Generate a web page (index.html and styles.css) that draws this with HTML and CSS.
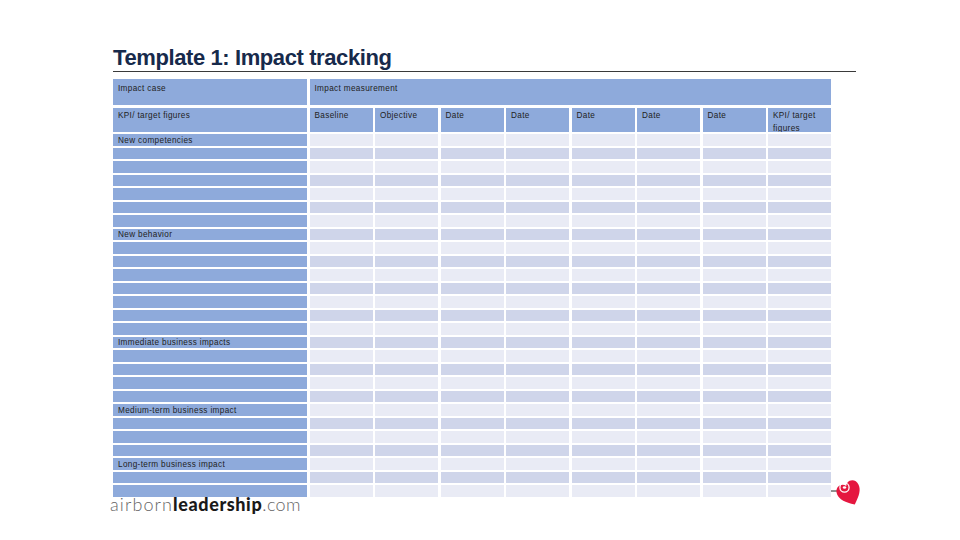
FILE: index.html
```html
<!DOCTYPE html>
<html>
<head>
<meta charset="utf-8">
<link rel="stylesheet" href="styles.css">
</head>
<body>
<div class="slide">
  <h1 class="title">Template 1: Impact tracking</h1>
  <div class="rule"></div>
  <div class="table">
    <div class="row head1"><span class="h">Impact case</span><span class="h wide">Impact measurement</span></div>
    <div class="row head2"><span class="h">KPI/ target figures</span><span class="h">Baseline</span><span class="h">Objective</span><span class="h">Date</span><span class="h">Date</span><span class="h">Date</span><span class="h">Date</span><span class="h">Date</span><span class="h">KPI/ target figures</span></div>
    <div class="body">
      <div class="row"><span class="k">New competencies</span><span></span><span></span><span></span><span></span><span></span><span></span><span></span><span></span></div>
      <div class="row"><span class="k"></span><span></span><span></span><span></span><span></span><span></span><span></span><span></span><span></span></div>
      <div class="row"><span class="k"></span><span></span><span></span><span></span><span></span><span></span><span></span><span></span><span></span></div>
      <div class="row"><span class="k"></span><span></span><span></span><span></span><span></span><span></span><span></span><span></span><span></span></div>
      <div class="row"><span class="k"></span><span></span><span></span><span></span><span></span><span></span><span></span><span></span><span></span></div>
      <div class="row"><span class="k"></span><span></span><span></span><span></span><span></span><span></span><span></span><span></span><span></span></div>
      <div class="row"><span class="k"></span><span></span><span></span><span></span><span></span><span></span><span></span><span></span><span></span></div>
      <div class="row"><span class="k">New behavior</span><span></span><span></span><span></span><span></span><span></span><span></span><span></span><span></span></div>
      <div class="row"><span class="k"></span><span></span><span></span><span></span><span></span><span></span><span></span><span></span><span></span></div>
      <div class="row"><span class="k"></span><span></span><span></span><span></span><span></span><span></span><span></span><span></span><span></span></div>
      <div class="row"><span class="k"></span><span></span><span></span><span></span><span></span><span></span><span></span><span></span><span></span></div>
      <div class="row"><span class="k"></span><span></span><span></span><span></span><span></span><span></span><span></span><span></span><span></span></div>
      <div class="row"><span class="k"></span><span></span><span></span><span></span><span></span><span></span><span></span><span></span><span></span></div>
      <div class="row"><span class="k"></span><span></span><span></span><span></span><span></span><span></span><span></span><span></span><span></span></div>
      <div class="row"><span class="k"></span><span></span><span></span><span></span><span></span><span></span><span></span><span></span><span></span></div>
      <div class="row"><span class="k">Immediate business impacts</span><span></span><span></span><span></span><span></span><span></span><span></span><span></span><span></span></div>
      <div class="row"><span class="k"></span><span></span><span></span><span></span><span></span><span></span><span></span><span></span><span></span></div>
      <div class="row"><span class="k"></span><span></span><span></span><span></span><span></span><span></span><span></span><span></span><span></span></div>
      <div class="row"><span class="k"></span><span></span><span></span><span></span><span></span><span></span><span></span><span></span><span></span></div>
      <div class="row"><span class="k"></span><span></span><span></span><span></span><span></span><span></span><span></span><span></span><span></span></div>
      <div class="row"><span class="k">Medium-term business impact</span><span></span><span></span><span></span><span></span><span></span><span></span><span></span><span></span></div>
      <div class="row"><span class="k"></span><span></span><span></span><span></span><span></span><span></span><span></span><span></span><span></span></div>
      <div class="row"><span class="k"></span><span></span><span></span><span></span><span></span><span></span><span></span><span></span><span></span></div>
      <div class="row"><span class="k"></span><span></span><span></span><span></span><span></span><span></span><span></span><span></span><span></span></div>
      <div class="row"><span class="k">Long-term business impact</span><span></span><span></span><span></span><span></span><span></span><span></span><span></span><span></span></div>
      <div class="row"><span class="k"></span><span></span><span></span><span></span><span></span><span></span><span></span><span></span><span></span></div>
      <div class="row"><span class="k"></span><span></span><span></span><span></span><span></span><span></span><span></span><span></span><span></span></div>
    </div>
  </div>
  <div class="logo"><span class="thin">airborn</span><span class="bold">leadership</span><span class="thin dot">.com</span></div>
  <svg class="badge" width="34" height="32" viewBox="0 0 34 32">
    <line x1="0" y1="13" x2="7" y2="13" stroke="#222" stroke-width="1"/>
    <g transform="translate(5 2) rotate(-25 13 13) scale(1.12)">
      <path d="M12 23 C5 17.5 1.5 13.5 1.5 8.5 C1.5 4.5 4.2 2 7.3 2 C9.5 2 11 3.2 12 5 C13 3.2 14.5 2 16.7 2 C19.8 2 22.5 4.5 22.5 8.5 C22.5 13.5 19 17.5 12 23 Z" fill="#e5173f"/>
    </g>
    <circle cx="13.5" cy="9.5" r="4.6" fill="none" stroke="#fff" stroke-width="1.3"/>
    <ellipse cx="13.5" cy="9.5" rx="1.7" ry="1.2" fill="#fff"/>
  </svg>
</div>
</body>
</html>
```
FILE: styles.css
```css
html, body {
  margin: 0;
  padding: 0;
  background: #ffffff;
}

.slide {
  position: relative;
  width: 960px;
  height: 540px;
  box-sizing: border-box;
  padding: 45px 0 0 113px;
  font-family: "Liberation Sans", Arial, sans-serif;
  overflow: hidden;
}

.title {
  margin: 0;
  font-size: 22px;
  line-height: 25px;
  font-weight: bold;
  color: #172a4b;
  letter-spacing: -0.4px;
}

.rule {
  width: 743px;
  height: 1px;
  background: #3a3a3a;
  margin-top: 1px;
}

.table {
  width: 718px;
  margin-top: 7px;
  display: flex;
  flex-direction: column;
  gap: 2px;
}

.body {
  display: flex;
  flex-direction: column;
  gap: 2px;
}

.row {
  display: grid;
  grid-template-columns: 194px repeat(8, 1fr);
  column-gap: 2.5px;
}

.row span {
  display: block;
  box-sizing: border-box;
  font-size: 8.2px;
  color: #222;
  letter-spacing: 0.35px;
  white-space: nowrap;
  overflow: hidden;
}

.head1 span {
  height: 26px;
  padding: 4px 5px 0;
  line-height: 12px;
  background: #8eaadb;
}

.head1 .wide {
  grid-column: 2 / -1;
}

.head2 {
  margin-top: 1px;
}

.head2 span {
  height: 24px;
  padding: 2px 5px 0;
  line-height: 12.5px;
  background: #8eaadb;
  white-space: normal;
}

.body .row span {
  height: 11.5px;
  line-height: 10px;
  padding: 1.5px 5px 0;
  background: #e9ebf5;
}

.body .row:nth-child(even) span {
  background: #cfd5ea;
}

.body .row span.k {
  background: #8eaadb;
}

.logo {
  margin-top: -1px;
  margin-left: -3px;
  font-family: Lato, "Liberation Sans", sans-serif;
  font-size: 18px;
  line-height: 17px;
  color: #444;
}

.logo .thin {
  font-weight: 300;
  color: #666;
  letter-spacing: 1.1px;
}

.logo .dot {
  letter-spacing: 0.4px;
}

.logo .bold {
  font-weight: 900;
  color: #1a1a1a;
  letter-spacing: 0.6px;
}

.badge {
  position: absolute;
  left: 831px;
  top: 478px;
}
```
